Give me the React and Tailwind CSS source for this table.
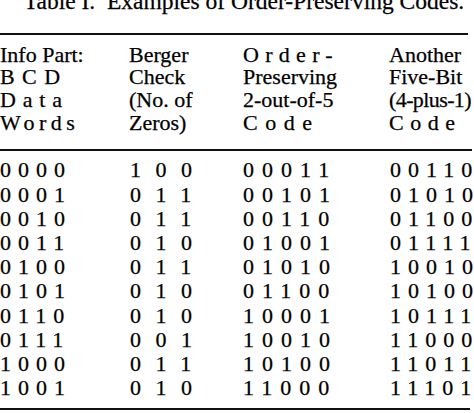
import React from "react";

const rows = [
  ["0000", "100", "00011", "00110"],
  ["0001", "011", "00101", "01010"],
  ["0010", "011", "00110", "01100"],
  ["0011", "010", "01001", "01111"],
  ["0100", "011", "01010", "10010"],
  ["0101", "010", "01100", "10100"],
  ["0110", "010", "10001", "10111"],
  ["0111", "001", "10010", "11000"],
  ["1000", "011", "10100", "11011"],
  ["1001", "010", "11000", "11101"],
];

const serif = { fontFamily: '"Liberation Serif", "Times New Roman", serif' };

export default function App() {
  return (
    <div
      className="w-[474px] h-[413px] overflow-hidden bg-white text-black [-webkit-text-stroke:0.25px_#000]"
      style={serif}
    >
      <div className="-mt-[10px] text-center text-[23.5px] leading-[23.5px] whitespace-nowrap pl-[14px]">
        Table I.{"\u00a0"} Examples of Order-Preserving Codes.
      </div>

      <div className="mt-[19px] mr-[6px] h-[2px] bg-[#111]" />

      <div className="mt-[9px] grid grid-cols-[129px_114px_146px_85px] text-[22px] leading-[22.7px] whitespace-nowrap">
        <div className="flex flex-col">
          <span>Info Part:</span>
          <span className="tracking-[7.4px]">BCD</span>
          <span className="tracking-[6.8px]">Data</span>
          <span className="tracking-[4.5px]">Words</span>
        </div>
        <div className="flex flex-col">
          <span>Berger</span>
          <span>Check</span>
          <span>(No. of</span>
          <span>Zeros)</span>
        </div>
        <div className="flex flex-col">
          <span className="tracking-[6.3px]">Order-</span>
          <span>Preserving</span>
          <span>2-out-of-5</span>
          <span className="tracking-[7.5px]">Code</span>
        </div>
        <div className="flex flex-col">
          <span>Another</span>
          <span>Five-Bit</span>
          <span className="tracking-[-0.6px]">(4-plus-1)</span>
          <span className="tracking-[6.5px]">Code</span>
        </div>
      </div>

      <div className="mt-[15px] mr-[2px] h-[2px] bg-[#111]" />

      <div className="mt-[7px] grid grid-cols-[129px_114px_146px_85px] text-[22px] leading-[24.2px] whitespace-nowrap">
        {rows.map((r, i) => (
          <React.Fragment key={i}>
            <span className="tracking-[7px]">{r[0]}</span>
            <span className="pl-[1px] tracking-[14.5px]">{r[1]}</span>
            <span className="tracking-[8px]">{r[2]}</span>
            <span className="pl-[1px] tracking-[7px]">{r[3]}</span>
          </React.Fragment>
        ))}
      </div>

      <div className="mt-[8px] mr-[4px] h-[2px] bg-[#111]" />
    </div>
  );
}
